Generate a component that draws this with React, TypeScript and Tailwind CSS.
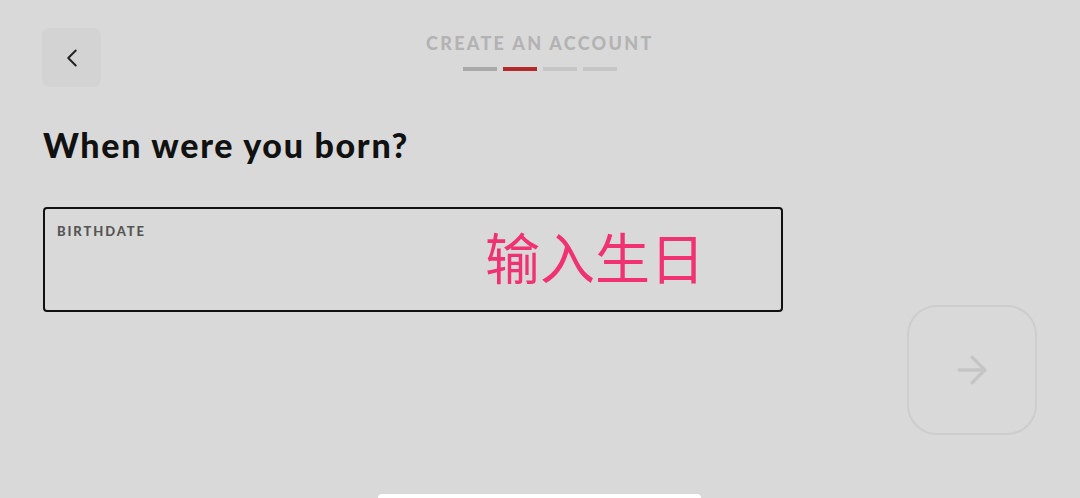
import { ChevronLeft, ArrowRight } from "lucide-react";

const App = () => {
  return (
    <div
      className="relative w-[1080px] h-[498px] overflow-hidden bg-[#d9d9d9]"
      style={{ fontFamily: '"Lato", "Noto Sans CJK SC", sans-serif' }}
    >
      {/* HEADER */}
      <div className="flex items-start pl-[42px] pt-[28px]">
        <button className="w-[59px] h-[59px] rounded-[8px] bg-[#d3d3d3] flex items-center justify-center">
          <ChevronLeft className="w-[30px] h-[30px] text-[#222]" strokeWidth={1.6} />
        </button>
        <div className="flex flex-col items-center ml-[325px] pt-[4px]">
          <div className="text-[18px] font-black tracking-[2.3px] text-[#b3b3b3] leading-[22px]">
            CREATE AN ACCOUNT
          </div>
          <div className="flex gap-[6px] mt-[13px]">
            <div className="w-[34px] h-[4px] bg-[#a9a9a9]" />
            <div className="w-[34px] h-[4px] bg-[#b22a2a]" />
            <div className="w-[34px] h-[4px] bg-[#c6c6c6]" />
            <div className="w-[34px] h-[4px] bg-[#c6c6c6]" />
          </div>
        </div>
      </div>

      {/* QUESTION */}
      <h1 className="pl-[43px] mt-[38px] text-[34px] font-black tracking-[1.7px] text-[#111] leading-[40px]">
        When were you born?
      </h1>

      {/* INPUT */}
      <div className="ml-[43px] mt-[42px] w-[740px] h-[105px] border-2 border-[#111] rounded-[4px] flex pl-[12px] pt-[14px]">
        <div className="text-[13px] font-black tracking-[1.9px] text-[#555] leading-[16px]">BIRTHDATE</div>
        <div
          className="ml-[339px] mt-[2px] text-[55px] text-[#f03272] leading-[60px]"
          style={{ fontFamily: '"Noto Sans CJK SC", sans-serif' }}
        >
          输入生日
        </div>
      </div>

      {/* NEXT BUTTON */}
      <div className="absolute left-[907px] top-[305px] w-[130px] h-[130px] rounded-[30px] border-2 border-[#cdcdcd] flex items-center justify-center">
        <ArrowRight className="w-[44px] h-[44px] text-[#c5c5c5]" strokeWidth={1.8} />
      </div>

      {/* HOME INDICATOR */}
      <div className="absolute left-[378px] top-[494px] w-[323px] h-[8px] rounded-t-[4px] bg-white" />
    </div>
  );
};

export default App;
